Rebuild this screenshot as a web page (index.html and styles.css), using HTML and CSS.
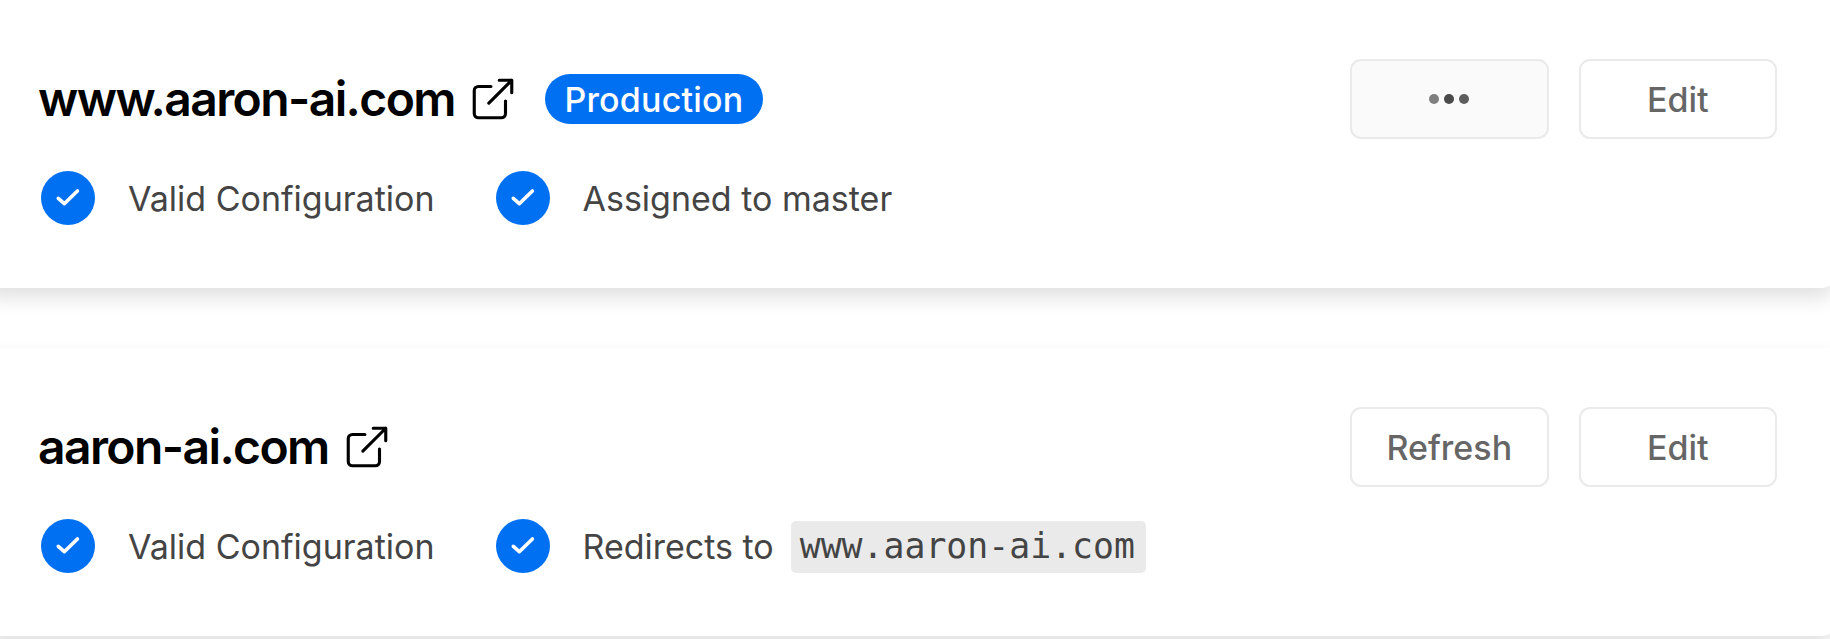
FILE: index.html
```html
<!DOCTYPE html>
<html lang="en">
<head>
    <meta charset="UTF-8">
    <meta name="viewport" content="width=device-width, initial-scale=1.0">
    <title>Domains</title>
    <link rel="stylesheet" href="styles.css">
</head>
<body>

    <svg class="sprite" width="0" height="0">
        <symbol id="external" viewBox="0 0 24 24">
            <path d="M18 13v6a2 2 0 0 1-2 2H5a2 2 0 0 1-2-2V8a2 2 0 0 1 2-2h6M15 3h6v6M10 14L21 3"/>
        </symbol>
        <symbol id="check" viewBox="0 0 54 54">
            <circle cx="27" cy="27" r="27" fill="#0070f3" stroke="none"/>
            <path d="M17.3 27.3l6 5.4L36.4 20"/>
        </symbol>
    </svg>

    <div class="domain-card">
        <div class="card-header">
            <h2 class="domain-name">www.aaron-ai.com</h2>
            <svg class="link-icon"><use href="#external"/></svg>
            <span class="badge">Production</span>
            <div class="actions">
                <button class="btn loading"><span class="dot"></span><span class="dot"></span><span class="dot"></span></button>
                <button class="btn">Edit</button>
            </div>
        </div>
        <div class="status-row">
            <div class="status first">
                <svg class="check-icon"><use href="#check"/></svg>
                <span>Valid Configuration</span>
            </div>
            <div class="status">
                <svg class="check-icon"><use href="#check"/></svg>
                <span>Assigned to master</span>
            </div>
        </div>
    </div>

    <div class="domain-card">
        <div class="card-header">
            <h2 class="domain-name">aaron-ai.com</h2>
            <svg class="link-icon"><use href="#external"/></svg>
            <div class="actions">
                <button class="btn">Refresh</button>
                <button class="btn">Edit</button>
            </div>
        </div>
        <div class="status-row">
            <div class="status first">
                <svg class="check-icon"><use href="#check"/></svg>
                <span>Valid Configuration</span>
            </div>
            <div class="status">
                <svg class="check-icon"><use href="#check"/></svg>
                <span>Redirects to</span>
                <code>www.aaron-ai.com</code>
            </div>
        </div>
    </div>

</body>
</html>
```
FILE: styles.css
```css
* {
    box-sizing: border-box;
    margin: 0;
    padding: 0;
}
html {
    overflow: hidden;
}
body {
    height: 639px;
    background: white;
    font-family: Inter, 'Liberation Sans', sans-serif;
    overflow: hidden;
}
.sprite {
    display: block;
}
.domain-card {
    height: 288px;
    margin: 0 -3px 60px -14px;
    padding: 59px 56px 0 52px;
    background: white;
    border-radius: 0 0 10px 10px;
    box-shadow: 0 10px 20px rgba(0, 0, 0, 0.12);
}
.domain-card:last-child {
    margin-bottom: 0;
}
.card-header {
    display: flex;
    align-items: center;
    height: 80px;
}
.domain-name {
    font-size: 48px;
    font-weight: 600;
    line-height: 60px;
    letter-spacing: -1.6px;
    color: black;
}
.link-icon {
    width: 50px;
    height: 50px;
    margin-left: 13.5px;
    fill: none;
    stroke: black;
    stroke-width: 1.5;
    stroke-linecap: round;
    stroke-linejoin: round;
}
.badge {
    width: 218px;
    height: 50px;
    margin-left: 26.5px;
    border-radius: 25px;
    background: #0070f3;
    color: white;
    font-size: 34px;
    font-weight: 500;
    line-height: 51px;
    letter-spacing: 0.2px;
    text-align: center;
}
.actions {
    display: flex;
    gap: 30px;
    margin-left: auto;
}
.btn {
    display: flex;
    align-items: center;
    justify-content: center;
    width: 198.5px;
    height: 80px;
    background: white;
    border: 2px solid #eaeaea;
    border-radius: 11px;
    color: #666;
    font-family: inherit;
    font-size: 34px;
    font-weight: 500;
}
.btn.loading {
    gap: 5px;
    background: #fafafa;
}
.dot {
    width: 10px;
    height: 10px;
    border-radius: 50%;
    background: #7f7f7f;
}
.dot:nth-child(2) {
    background: #4a4a4a;
}
.dot:nth-child(3) {
    background: #5e5e5e;
}
.status-row {
    display: flex;
    margin-top: 32px;
    padding-left: 3px;
}
.status {
    display: flex;
    align-items: center;
    height: 54px;
    color: #444;
    font-size: 34px;
}
.status.first {
    width: 454.5px;
}
.check-icon {
    width: 54px;
    height: 54px;
    margin-right: 33px;
    fill: none;
    stroke: white;
    stroke-width: 3.6;
    stroke-linecap: round;
    stroke-linejoin: round;
}
code {
    height: 52px;
    margin: 2px 0 0 17px;
    padding: 0 11px 0 9px;
    border-radius: 5px;
    background: #eaeaea;
    font-family: 'DejaVu Sans Mono', monospace;
    font-size: 34.8px;
    line-height: 51px;
}
```
